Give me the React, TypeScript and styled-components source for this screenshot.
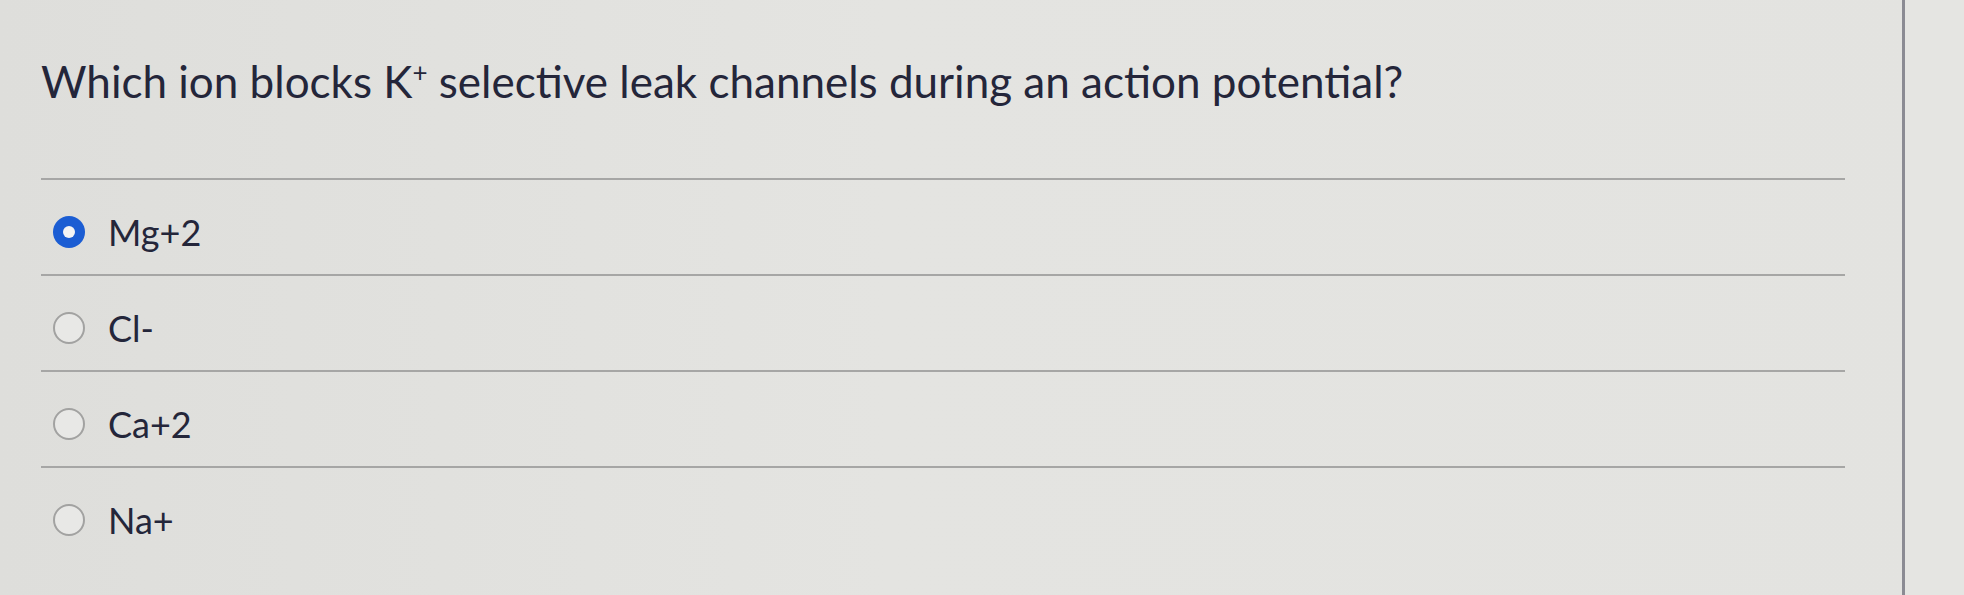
import React from "react";
import styled, { createGlobalStyle } from "styled-components";

const Global = createGlobalStyle`
  html, body { margin: 0; padding: 0; background: #e3e3e0; }
  body { font-family: Lato, "Noto Sans", sans-serif; }
`;

const Page = styled.div`
  display: flex;
  width: 1964px;
  height: 595px;
  overflow: hidden;
  background: linear-gradient(90deg, #dededb 0%, #e4e4e1 45%, #e3e3e0 100%);
`;

const Main = styled.main`
  width: 1902px;
  flex: none;
  box-sizing: border-box;
  padding: 0 57px 0 41px;
`;

const EdgeRule = styled.div`
  width: 3px;
  flex: none;
  background: #8b8b93;
  box-shadow: 1px 0 0 #c9c9cc;
`;

const Side = styled.aside`
  flex: 1;
  background: #e5e5e2;
`;

const Question = styled.h1`
  margin: 0;
  height: 178px;
  box-sizing: border-box;
  padding-top: 53px;
  font-family: Lato, "Noto Sans", sans-serif;
  font-weight: 400;
  font-size: 44px;
  line-height: 56px;
  color: #24263a;
`;

const Sup = styled.sup`
  font-size: 26px;
  line-height: 0;
  vertical-align: 16px;
`;

const OptionList = styled.ul`
  margin: 0;
  padding: 0;
  list-style: none;
`;

const Option = styled.li`
  display: flex;
  align-items: center;
  gap: 23px;
  height: 96px;
  box-sizing: border-box;
  padding: 10px 0 0 12px;
  border-top: 2px solid #a6a6a5;
`;

const Radio = styled.span<{ $checked?: boolean }>`
  flex: none;
  width: 32px;
  height: 32px;
  border-radius: 50%;
  box-sizing: border-box;
  display: flex;
  align-items: center;
  justify-content: center;
  background: ${(p) => (p.$checked ? "#1b5dd3" : "#e8e8e6")};
  border: ${(p) => (p.$checked ? "none" : "2px solid #a2a2a1")};
  &::after {
    content: "";
    display: ${(p) => (p.$checked ? "block" : "none")};
    width: 12px;
    height: 12px;
    border-radius: 50%;
    background: #f4f4f4;
  }
`;

const Label = styled.span`
  font-family: Lato, "Noto Sans", sans-serif;
  font-size: 36px;
  line-height: 44px;
  color: #24263a;
`;

const options = [
  { text: "Mg+2", checked: true },
  { text: "Cl-", checked: false },
  { text: "Ca+2", checked: false },
  { text: "Na+", checked: false },
];

export default function App() {
  return (
    <>
      <Global />
      <Page>
        <Main>
          <Question>
            Which ion blocks K<Sup>+</Sup> selective leak channels during an action potential?
          </Question>
          <OptionList>
            {options.map((o) => (
              <Option key={o.text}>
                <Radio $checked={o.checked} />
                <Label>{o.text}</Label>
              </Option>
            ))}
          </OptionList>
        </Main>
        <EdgeRule />
        <Side />
      </Page>
    </>
  );
}
